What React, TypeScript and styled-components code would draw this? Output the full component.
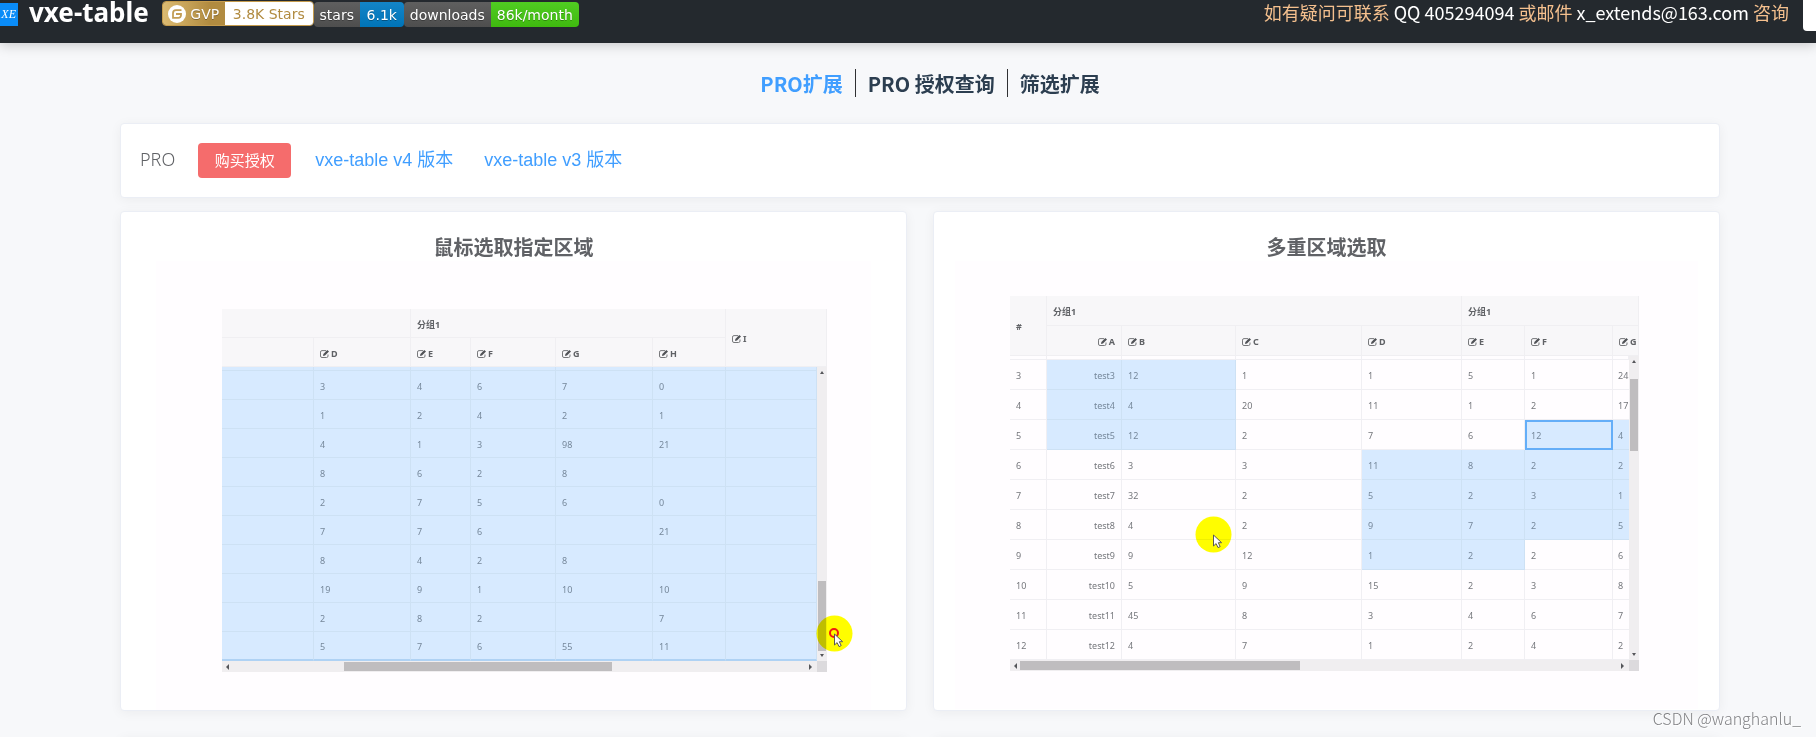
import React from "react";
import styled, { createGlobalStyle } from "styled-components";

const GlobalStyle = createGlobalStyle`
  * { box-sizing: border-box; }
  body {
    margin: 0;
    background: #f7f8fa;
    color: #606266;
    font-family: "Noto Sans", "Noto Sans CJK SC", sans-serif;
    font-size: 18px;
  }
`;

const Page = styled.div`
  position: relative;
  height: 100vh;
  overflow: hidden;
`;

/* ---------- top bar ---------- */

const TopBar = styled.header`
  display: flex;
  align-items: flex-start;
  height: 43px;
  background: #24292e;
  box-shadow: 0 2px 12px rgba(0, 0, 0, 0.2);
`;

const Logo = styled.div`
  display: flex;
  justify-content: flex-end;
  align-items: center;
  width: 18px;
  height: 23px;
  margin-top: 3px;
  padding-right: 2px;
  background: #0a8cf8;
  color: #fff;
  font: italic 12px "Liberation Serif", serif;
`;

const Brand = styled.a`
  margin-left: 11px;
  color: #fff;
  font-size: 26px;
  font-weight: 700;
  line-height: 24px;
  text-decoration: none;
`;

const Badges = styled.div`
  display: flex;
  margin-left: 13px;
`;

const Badge = styled.a<{ $gold?: boolean }>`
  display: flex;
  height: 25px;
  margin-top: ${(p) => (p.$gold ? 1 : 2)}px;
  overflow: hidden;
  border: ${(p) => (p.$gold ? "1px solid #c59b4c" : "0")};
  border-radius: 4px;
  color: #fff;
  font-family: "DejaVu Sans", sans-serif;
  font-size: 14px;
  line-height: 20px;
  text-decoration: none;
`;

const BadgePart = styled.span<{ $bg: string; $width: number; $color?: string }>`
  display: flex;
  align-items: center;
  justify-content: center;
  gap: 4px;
  width: ${(p) => p.$width}px;
  background: ${(p) => p.$bg};
  color: ${(p) => p.$color ?? "#fff"};
  text-shadow: ${(p) => (p.$color ? "none" : "0 1px 0 rgba(0, 0, 0, 0.3)")};
`;

const Contact = styled.p`
  margin: 0 14px 0 auto;
  color: #f5c08e;
  font-family: "Noto Sans CJK SC", sans-serif;
  line-height: 24px;
  white-space: nowrap;

  span { color: #fff; }
`;

const CornerButton = styled.button`
  width: 13px;
  height: 31px;
  padding: 0;
  border: 0;
  border-radius: 0 0 0 4px;
  background: #fff;
`;

/* ---------- content ---------- */

const Content = styled.main`
  padding: 26px 96px 0 120px;
`;

const Tabs = styled.nav`
  display: flex;
  justify-content: center;
  margin-bottom: 26px;
  padding-left: 20px;
`;

const Tab = styled.a<{ $active?: boolean }>`
  padding: 2px 12px 0;
  color: ${(p) => (p.$active ? "#409eff" : "#2c3e50")};
  font-family: "Noto Sans CJK SC", sans-serif;
  font-size: 20px;
  font-weight: 700;
  line-height: 26px;
  text-decoration: none;

  & + & { border-left: 1px solid #303133; }
`;

const Card = styled.section`
  border: 1px solid #ebeef5;
  border-radius: 4px;
  background: #fff;
  box-shadow: 0 2px 12px rgba(0, 0, 0, 0.05);
`;

const LicenseCard = styled(Card)`
  display: flex;
  align-items: baseline;
  margin-bottom: 13px;
  padding: 19px 19px;
  font-weight: 300;
`;

const BuyButton = styled.button`
  width: 93px;
  height: 35px;
  margin: 0 24px 0 23px;
  padding: 0 0 2px;
  border: 0;
  border-radius: 4px;
  background: #f56c6c;
  color: #fff;
  font-family: "Noto Sans CJK SC", sans-serif;
  font-size: 15px;
`;

const VersionLink = styled.a`
  margin-right: 31px;
  color: #409eff;
  font-family: "Liberation Sans", "Noto Sans CJK SC", sans-serif;
  font-weight: 400;
  text-decoration: none;
`;

const Gallery = styled.div`
  display: grid;
  grid-template-columns: 1fr 1fr;
  gap: 26px;
`;

const DemoCard = styled(Card)`
  min-height: 60px;
`;

const DemoTitle = styled.h2`
  margin: 21px 0 0;
  font-family: "Noto Sans CJK SC", sans-serif;
  font-size: 20px;
  font-weight: 700;
  line-height: 28px;
  text-align: center;
`;

const Shot = styled.div<{ $maxWidth: number; $padding: string }>`
  position: relative;
  max-width: ${(p) => p.$maxWidth}px;
  margin: 0 auto;
  padding: ${(p) => p.$padding};
  background: #fffdff;
`;

/* ---------- demo tables ---------- */

const Grid = styled.table<{ $row: number }>`
  width: 100%;
  table-layout: fixed;
  border-collapse: separate;
  border-spacing: 0;
  color: #75777c;
  font-size: 9px;
  line-height: 12px;

  th, td {
    height: ${(p) => p.$row}px;
    padding: 3px 0 0 6px;
    overflow: hidden;
    text-align: left;
    white-space: nowrap;
  }
`;

const Head = styled.th<{ $right?: boolean }>`
  && {
    padding-right: ${(p) => (p.$right ? 6 : 0)}px;
    text-align: ${(p) => (p.$right ? "right" : "left")};
  }
  border-right: 1px solid #f0eff2;
  border-bottom: 1px solid #f0eff2;
  background: #f8f7f9;
  color: #606266;
  font-weight: 700;
`;

const Cell = styled.td<{ $sel?: boolean; $right?: boolean; $focus?: boolean; $last?: boolean }>`
  && {
    padding-right: ${(p) => (p.$right ? 6 : 0)}px;
    text-align: ${(p) => (p.$right ? "right" : "left")};
  }
  border-right: 1px solid ${(p) => (p.$sel ? "#cde1f4" : "#f0eff3")};
  border-bottom: 1px solid ${(p) => (p.$sel ? "#cde1f4" : "#f0eff3")};
  background: ${(p) => (p.$sel ? "#d7eaff" : "transparent")};
  color: ${(p) => (p.$sel ? "#76889b" : "inherit")};
  ${(p) => p.$focus && "border-color: #64aef8; box-shadow: inset 2px 2px 0 #64aef8, inset -1px -1px 0 #64aef8;"}
  ${(p) => p.$last && "border-bottom: 2px solid #afd2f4;"}

  &&:nth-last-child(1):nth-child(8) { padding-left: 5px; border-right: 0; }
`;

const Sliver = styled(Cell)`
  && { height: 4px; padding: 0; line-height: 0; }
`;

const EdgeCell = styled.td`
  && { height: auto; padding: 0; }
  background: #f0eef0;
  vertical-align: top;
`;

const VTrack = styled.div<{ $height: number }>`
  display: flex;
  flex-direction: column;
  align-items: center;
  height: ${(p) => p.$height}px;
  padding: 3px 1px;
`;

const HTrack = styled.div`
  display: flex;
  align-items: center;
  height: 11px;
  background: #f0eef0;
`;

const HBar = styled.div`
  display: flex;
  flex: 1;
  align-items: center;
  padding: 0 4px 0 3px;
`;

const Thumb = styled.div<{ $v?: boolean; $size: number; $before: number }>`
  width: ${(p) => (p.$v ? "100%" : p.$size + "px")};
  height: ${(p) => (p.$v ? p.$size : 9)}px;
  margin: ${(p) => (p.$v ? `${p.$before}px 0 auto` : `0 auto 0 ${p.$before}px`)};
  background: #bfbdbf;
`;

const Corner = styled.div`
  width: 10px;
  height: 11px;
  background: #dcdadd;
`;

const Pointer = styled.svg<{ $x: number; $y: number }>`
  position: absolute;
  left: ${(p) => p.$x}px;
  top: ${(p) => p.$y}px;
  mix-blend-mode: multiply;
`;

const Arrow = styled(Pointer)`
  mix-blend-mode: normal;
`;

const PenSvg = styled.svg`
  margin-right: 2px;
  vertical-align: -1px;
`;

const Watermark = styled.div`
  position: absolute;
  right: 15px;
  bottom: 7px;
  color: #808184;
  font-family: "Noto Sans CJK SC", sans-serif;
  font-size: 16px;
  font-weight: 300;
  line-height: 24px;
  text-shadow: 1px 1px 0 #fff;
`;

const Pen = () => (
  <PenSvg width="9" height="8" viewBox="0 0 18 16" aria-hidden="true">
    <path d="M12 1.200H4A3 3 0 0 0 1 4.200V12a3 3 0 0 0 3 3h9a3 3 0 0 0 3-3V9" fill="none" stroke="#77787b" strokeWidth="2" />
    <path d="M6 12l.8-4.200L14.500 0l3.500 3.200-8 7.800z" fill="#505256" />
  </PenSvg>
);

const Tip = ({ dir }: { dir: "up" | "down" | "left" | "right" }) => {
  const shapes = { up: "1,4 5,4 3,1", down: "1,2 5,2 3,5", left: "4,0 4,6 1,3", right: "2,0 2,6 5,3" };
  return (
    <svg width="6" height="6" viewBox="0 0 6 6" aria-hidden="true">
      <polygon points={shapes[dir]} fill="#55565a" />
    </svg>
  );
};

const Spot = ({ x, y, pressed }: { x: number; y: number; pressed?: boolean }) => (
  <>
    <Pointer $x={x} $y={y} width="37" height="37" viewBox="0 0 37 37" aria-hidden="true">
      <circle cx="18.500" cy="18.500" r="18" fill="#ffff00" />
    </Pointer>
    <Arrow $x={x} $y={y} width="37" height="37" viewBox="0 0 37 37" aria-hidden="true">
      {pressed && <circle cx="18" cy="18" r="4" fill="none" stroke="#f01c10" strokeWidth="2" />}
      <path d="M18.500 19v11l2.600-2.400 1.900 4 2.200-1-1.900-3.900h3.300z" fill="#fff" stroke="#5a5a50" strokeWidth="1" />
    </Arrow>
  </>
);

type BarsProps = { size: number; before: number };
const Bottom = ({ size, before }: BarsProps) => (
  <HTrack>
    <HBar>
      <Tip dir="left" />
      <Thumb $size={size} $before={before} />
      <Tip dir="right" />
    </HBar>
    <Corner />
  </HTrack>
);

const regionRows = [
  ["3", "4", "6", "7", "0"],
  ["1", "2", "4", "2", "1"],
  ["4", "1", "3", "98", "21"],
  ["8", "6", "2", "8", ""],
  ["2", "7", "5", "6", "0"],
  ["7", "7", "6", "", "21"],
  ["8", "4", "2", "8", ""],
  ["19", "9", "1", "10", "10"],
  ["2", "8", "2", "", "7"],
  ["5", "7", "6", "55", "11"],
];

const RegionTable = () => (
  <Grid $row={29}>
    <colgroup>
      {[92, 97, 60, 85, 97, 73, 91, 10].map((w, i) => <col key={i} style={{ width: w }} />)}
    </colgroup>
    <thead>
      <tr>
        <Head colSpan={2} />
        <Head colSpan={4}>分组1</Head>
        <Head colSpan={2} rowSpan={2}><Pen />I</Head>
      </tr>
      <tr>
        <Head />
        {["D", "E", "F", "G", "H"].map((c) => <Head key={c}><Pen />{c}</Head>)}
      </tr>
    </thead>
    <tbody>
      <tr>
        {[0, 1, 2, 3, 4, 5, 6].map((i) => <Sliver key={i} $sel />)}
        <EdgeCell rowSpan={11}>
          <VTrack $height={294}>
            <Tip dir="up" />
            <Thumb $v $size={70} $before={205} />
            <Tip dir="down" />
          </VTrack>
        </EdgeCell>
      </tr>
      {regionRows.map((row, r) => (
        <tr key={r}>
          {["", ...row, ""].map((v, i) => <Cell key={i} $sel $last={r === 9}>{v}</Cell>)}
        </tr>
      ))}
    </tbody>
  </Grid>
);

const multiRows = [
  ["3", "test3", "12", "1", "1", "5", "1", "24"],
  ["4", "test4", "4", "20", "11", "1", "2", "17"],
  ["5", "test5", "12", "2", "7", "6", "12", "4"],
  ["6", "test6", "3", "3", "11", "8", "2", "2"],
  ["7", "test7", "32", "2", "5", "2", "3", "1"],
  ["8", "test8", "4", "2", "9", "7", "2", "5"],
  ["9", "test9", "9", "12", "1", "2", "2", "6"],
  ["10", "test10", "5", "9", "15", "2", "3", "8"],
  ["11", "test11", "45", "8", "3", "4", "6", "7"],
  ["12", "test12", "4", "7", "1", "2", "4", "2"],
];

const isSelected = (r: number, c: number) =>
  (r <= 2 && (c === 1 || c === 2)) ||
  (r === 2 && c >= 6) ||
  (r >= 3 && r <= 5 && c >= 4) ||
  (r === 6 && (c === 4 || c === 5));

const MultiTable = () => (
  <Grid $row={30}>
    <colgroup>
      {[37, 75, 114, 126, 100, 63, 88, 16, 10].map((w, i) => <col key={i} style={{ width: w }} />)}
    </colgroup>
    <thead>
      <tr>
        <Head rowSpan={2}>#</Head>
        <Head colSpan={4}>分组1</Head>
        <Head colSpan={4}>分组1</Head>
      </tr>
      <tr>
        {["A", "B", "C", "D", "E", "F"].map((c) => <Head key={c} $right={c === "A"}><Pen />{c}</Head>)}
        <Head colSpan={2}><Pen />G</Head>
      </tr>
    </thead>
    <tbody>
      <tr>
        {[0, 1, 2, 3, 4, 5, 6, 7].map((i) => <Sliver key={i} />)}
        <EdgeCell rowSpan={11}>
          <VTrack $height={304}>
            <Tip dir="up" />
            <Thumb $v $size={72} $before={14} />
            <Tip dir="down" />
          </VTrack>
        </EdgeCell>
      </tr>
      {multiRows.map((row, r) => (
        <tr key={r}>
          {row.map((v, c) => (
            <Cell key={c} $sel={isSelected(r, c)} $right={c === 1} $focus={r === 2 && c === 6}>{v}</Cell>
          ))}
        </tr>
      ))}
    </tbody>
  </Grid>
);

export default function App() {
  return (
    <Page>
      <GlobalStyle />
      <TopBar>
        <Logo>XE</Logo>
        <Brand href="#">vxe-table</Brand>
        <Badges>
          <Badge href="#" $gold>
            <BadgePart $bg="linear-gradient(90deg, #dcbb72, #b18b40 75%)" $width={62}>
              <svg width="18" height="18" viewBox="0 0 18 18" aria-hidden="true">
                <circle cx="9" cy="9" r="9" fill="#fff" />
                <path d="M13.500 5.200H8A3 3 0 0 0 5 8.200v4.600h5.500a2.500 2.500 0 0 0 2.500-2.500V9H8" fill="none" stroke="#c39d55" strokeWidth="1.800" />
              </svg>
              GVP
            </BadgePart>
            <BadgePart $bg="#fff" $width={88} $color="#b18b40">3.8K Stars</BadgePart>
          </Badge>
          <Badge href="#">
            <BadgePart $bg="linear-gradient(#5f5f5f, #4e4e4e)" $width={46}>stars</BadgePart>
            <BadgePart $bg="linear-gradient(#1485c8, #0074b8)" $width={44}>6.1k</BadgePart>
          </Badge>
          <Badge href="#">
            <BadgePart $bg="linear-gradient(#5f5f5f, #4e4e4e)" $width={87}>downloads</BadgePart>
            <BadgePart $bg="linear-gradient(#50cc22, #3fb90f)" $width={88}>86k/month</BadgePart>
          </Badge>
        </Badges>
        <Contact>
          如有疑问可联系 <span>QQ 405294094</span> 或邮件 <span>x_extends@163.com</span> 咨询
        </Contact>
        <CornerButton aria-label="menu" />
      </TopBar>

      <Content>
        <Tabs>
          <Tab href="#" $active>PRO扩展</Tab>
          <Tab href="#">PRO 授权查询</Tab>
          <Tab href="#">筛选扩展</Tab>
        </Tabs>

        <LicenseCard>
          <span>PRO</span>
          <BuyButton>购买授权</BuyButton>
          <VersionLink href="#">vxe-table v4 版本</VersionLink>
          <VersionLink href="#">vxe-table v3 版本</VersionLink>
        </LicenseCard>

        <Gallery>
          <DemoCard>
            <DemoTitle>鼠标选取指定区域</DemoTitle>
            <Shot $maxWidth={715} $padding="48px 44px 38px 66px">
              <RegionTable />
              <Bottom size={268} before={113} />
              <Spot x={660} y={354} pressed />
            </Shot>
          </DemoCard>
          <DemoCard>
            <DemoTitle>多重区域选取</DemoTitle>
            <Shot $maxWidth={743} $padding="35px 59px 38px 55px">
              <MultiTable />
              <Bottom size={280} before={1} />
              <Spot x={240} y={255} />
            </Shot>
          </DemoCard>
          <DemoCard />
          <DemoCard />
        </Gallery>
      </Content>
      <Watermark>CSDN @wanghanlu_</Watermark>
    </Page>
  );
}
